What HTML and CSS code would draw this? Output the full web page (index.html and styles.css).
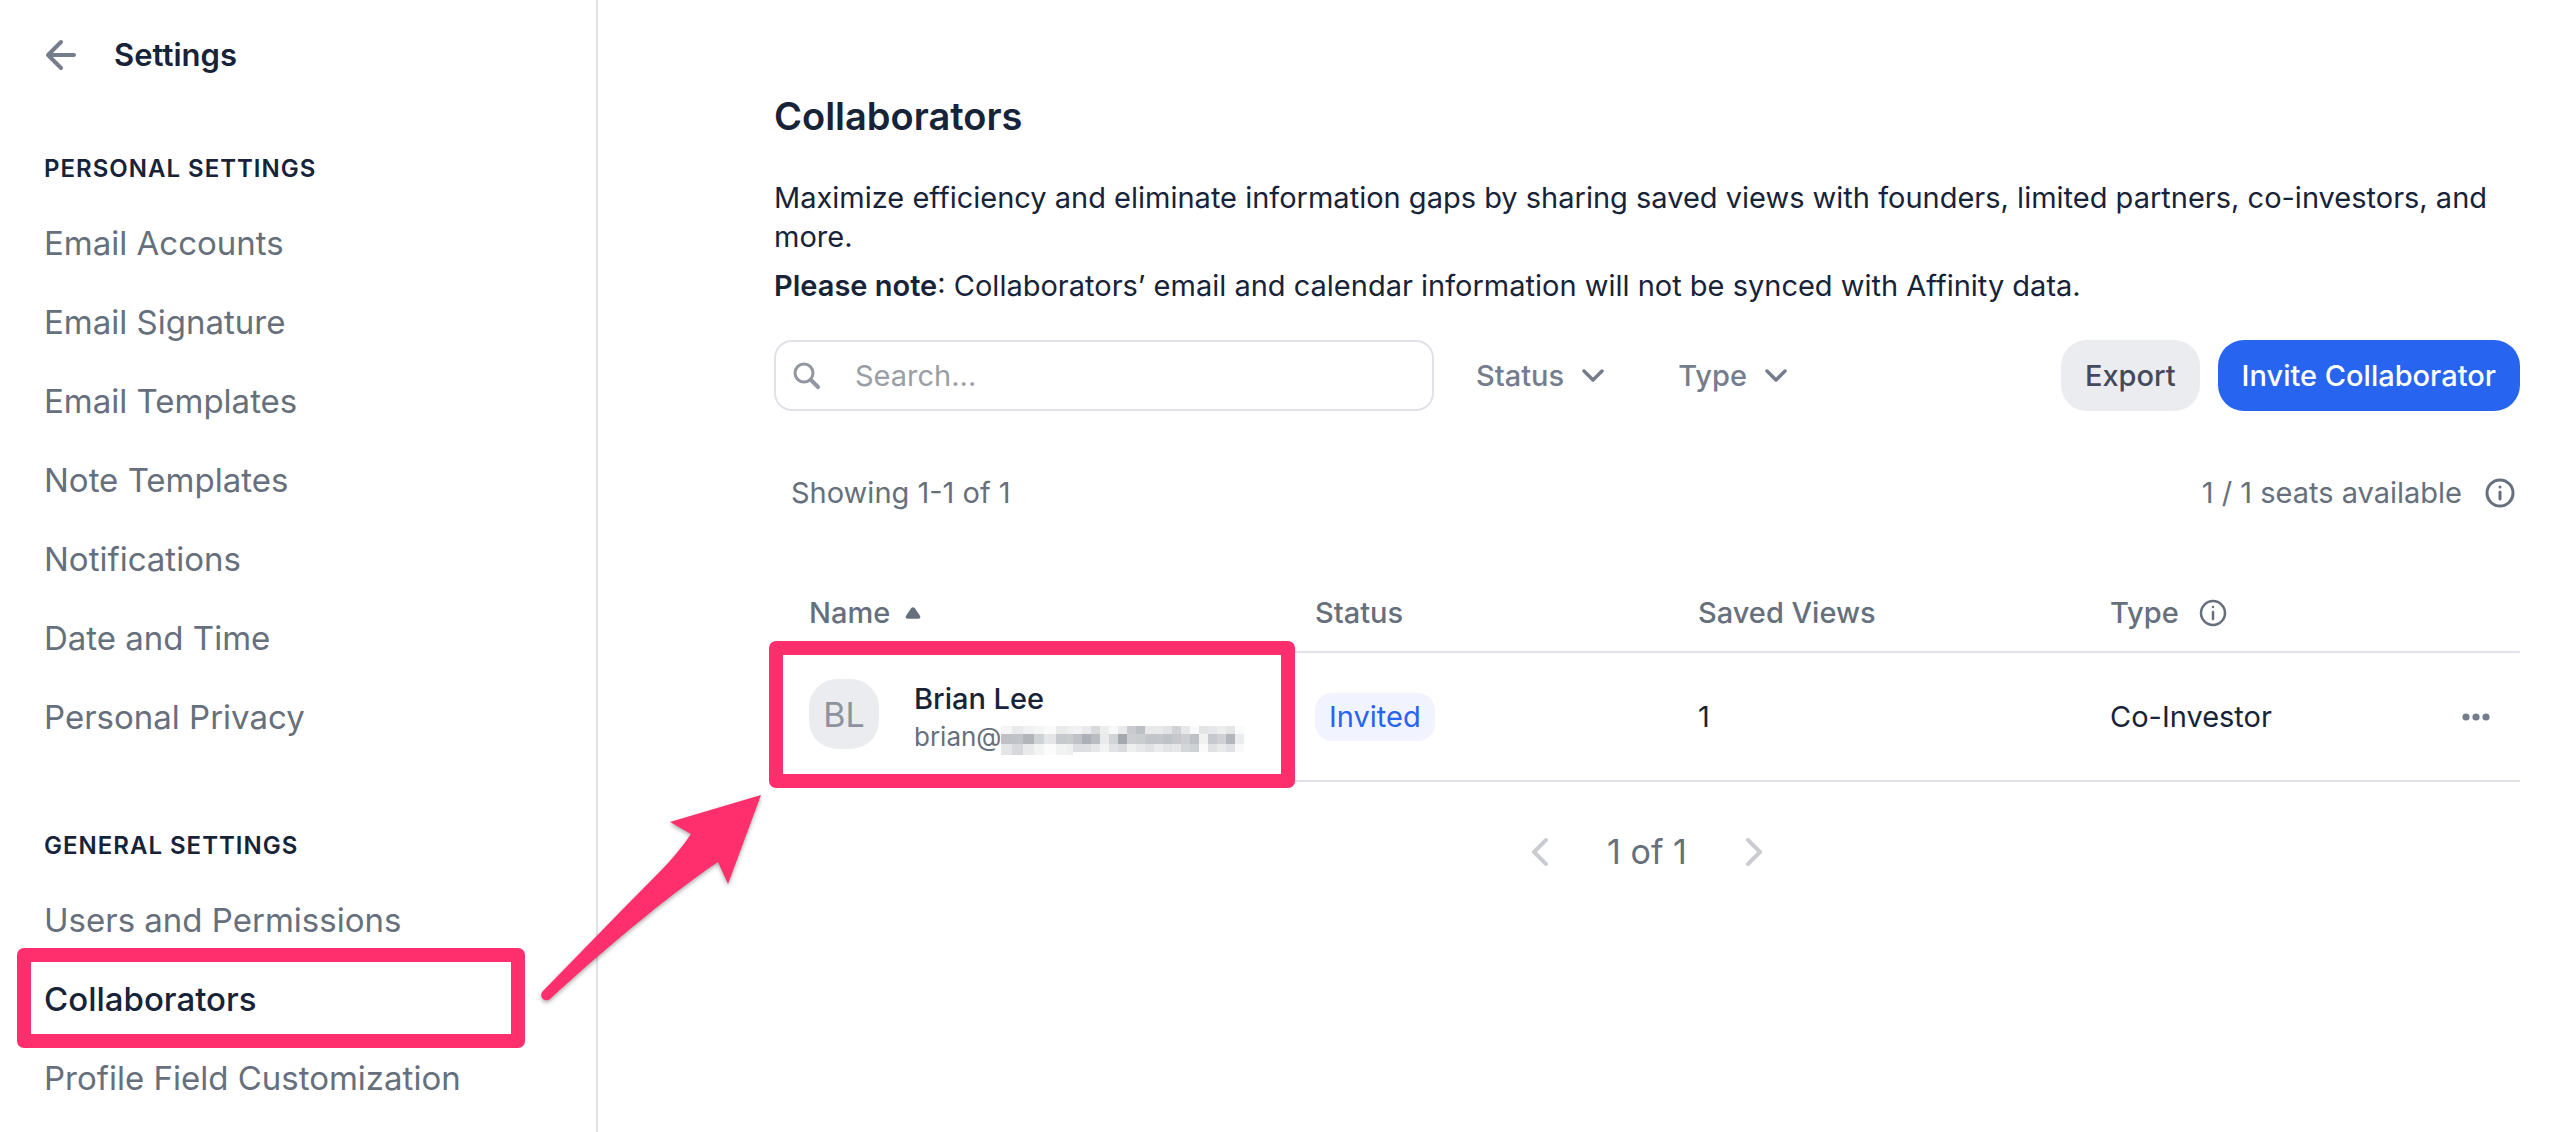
FILE: index.html
```html
<!DOCTYPE html>
<html lang="en">
<head>
<meta charset="utf-8">
<title>Settings – Collaborators</title>
<link rel="stylesheet" href="styles.css">
</head>
<body>
<div class="app">
  <aside class="sidebar">
    <header class="sidebar-header">
      <button class="icon-button" type="button" aria-label="Back">
        <svg width="34" height="32" viewBox="0 0 34 32" fill="none" stroke="#757d8d" stroke-width="4" stroke-linecap="round" stroke-linejoin="round"><path d="M30 16H4M17 3L4 16l13 13"/></svg>
      </button>
      <h2 class="sidebar-title">Settings</h2>
    </header>
    <nav class="nav-group" aria-labelledby="personal">
      <h3 class="nav-heading" id="personal">PERSONAL SETTINGS</h3>
      <a class="nav-link" href="#">Email Accounts</a>
      <a class="nav-link" href="#">Email Signature</a>
      <a class="nav-link" href="#">Email Templates</a>
      <a class="nav-link" href="#">Note Templates</a>
      <a class="nav-link" href="#">Notifications</a>
      <a class="nav-link" href="#">Date and Time</a>
      <a class="nav-link" href="#">Personal Privacy</a>
    </nav>
    <nav class="nav-group" aria-labelledby="general">
      <h3 class="nav-heading" id="general">GENERAL SETTINGS</h3>
      <a class="nav-link" href="#">Users and Permissions</a>
      <a class="nav-link active" href="#" aria-current="page">Collaborators
        <svg class="arrow" width="250" height="230" viewBox="0 0 250 230" fill="#ff2e6c" aria-hidden="true"><path d="M231 15L140 42L161 54C144 80 120 101 91 131L13 211A5 5 0 0 0 20 219C67 176 110 140 145 113C160 102 174 91 188 82L198 104Z"/></svg>
      </a>
      <a class="nav-link" href="#">Profile Field Customization</a>
    </nav>
  </aside>

  <main class="content">
    <h1 class="title">Collaborators</h1>
    <p class="text">Maximize efficiency and eliminate information gaps by sharing saved views with founders, limited partners, co-investors, and more.</p>
    <p class="text"><strong>Please note</strong>: Collaborators’ email and calendar information will not be synced with Affinity data.</p>

    <div class="toolbar">
      <label class="search">
        <svg width="28" height="28" viewBox="0 0 28 28" fill="none" stroke="#9297a2" stroke-width="3" stroke-linecap="round"><circle cx="11" cy="11" r="9"/><path d="M18 18l7 7" stroke-width="4"/></svg>
        <input class="search-input" type="search" placeholder="Search..." aria-label="Search">
      </label>
      <div class="filters">
        <button class="filter" type="button">Status
          <svg width="24" height="14" viewBox="0 0 24 14" fill="none" stroke="currentColor" stroke-width="3.5" stroke-linecap="round" stroke-linejoin="round"><path d="M3 2l9 9 9-9"/></svg>
        </button>
        <button class="filter" type="button">Type
          <svg width="24" height="14" viewBox="0 0 24 14" fill="none" stroke="currentColor" stroke-width="3.5" stroke-linecap="round" stroke-linejoin="round"><path d="M3 2l9 9 9-9"/></svg>
        </button>
      </div>
      <div class="actions">
        <button class="button" type="button">Export</button>
        <button class="button primary" type="button">Invite Collaborator</button>
      </div>
    </div>

    <div class="summary">
      <span>Showing 1-1 of 1</span>
      <span class="seats">1 / 1 seats available
        <svg width="30" height="30" viewBox="0 0 30 30" fill="none" stroke="currentColor" stroke-width="3" stroke-linecap="round"><circle cx="15" cy="15" r="13"/><path d="M15 14v7M15 9v0"/></svg>
      </span>
    </div>

    <table class="table">
      <colgroup><col class="col-name"><col class="col-status"><col class="col-views"><col><col class="col-more"></colgroup>
      <thead>
        <tr>
          <th class="name-col" scope="col"><span class="head">Name <svg width="16" height="13" viewBox="0 0 18 14" fill="currentColor"><path d="M9 1Q10 1 11 2L17 11Q18 14 15 14H3Q0 14 1 11L7 2Q8 1 9 1Z"/></svg></span></th>
          <th scope="col">Status</th>
          <th scope="col">Saved Views</th>
          <th scope="col"><span class="head wide">Type <svg width="28" height="28" viewBox="0 0 28 28" fill="none" stroke="currentColor" stroke-width="2.5" stroke-linecap="round"><circle cx="14" cy="14" r="12"/><path d="M14 13v7M14 8v0"/></svg></span></th>
          <th scope="col" aria-label="Actions"></th>
        </tr>
      </thead>
      <tbody>
        <tr>
          <td class="name-col highlighted">
            <div class="person">
              <span class="avatar">BL</span>
              <div>
                <div class="person-name">Brian Lee</div>
                <div class="person-email">brian@<svg id="redacted" width="250" height="29" viewBox="0 0 250 29" shape-rendering="crispEdges" aria-hidden="true"></svg></div>
              </div>
            </div>
          </td>
          <td><span class="badge">Invited</span></td>
          <td>1</td>
          <td>Co-Investor</td>
          <td>
            <button class="icon-button" type="button" aria-label="More"><svg width="28" height="8" viewBox="0 0 28 8" fill="#757d8d"><circle cx="4" cy="4" r="3.6"/><circle cx="14" cy="4" r="3.6"/><circle cx="24" cy="4" r="3.6"/></svg></button>
          </td>
        </tr>
      </tbody>
    </table>

    <div class="pager">
      <button class="icon-button" type="button" aria-label="Previous page"><svg width="18" height="28" viewBox="0 0 18 28" fill="none" stroke="#cbccd1" stroke-width="4" stroke-linecap="round" stroke-linejoin="round"><path d="M15 2L3 14l12 12"/></svg></button>
      <span>1 of 1</span>
      <button class="icon-button" type="button" aria-label="Next page"><svg width="18" height="28" viewBox="0 0 18 28" fill="none" stroke="#cbccd1" stroke-width="4" stroke-linecap="round" stroke-linejoin="round"><path d="M3 2l12 12L3 26"/></svg></button>
    </div>
  </main>
</div>
<script src="script.js"></script>
</body>
</html>
```
FILE: script.js
```js
// Mosaic that hides the domain of the e-mail address.
const widths = [11, 11, 11, 10, 12, 11, 6].concat(Array(19).fill(9));
const rows = [
  { y: 0, h: 8, c: "f5f5f5 e9eaeb f0f1f2 f4f5f5 fafbfa e9ebeb eeeff0 f2f2f2 e9eaeb d8dadd eceded f7f8f8 e9eaec c8cacf bcbfc4 e7e9e9 e8e9ea e2e3e5 d0d2d6 e6e7e9 fafafa e2e4e6 e5e7e8 eceded e3e5e7 fafbfb" },
  { y: 8, h: 10, c: "bfc1c6 c0c3c7 b2b6ba d0d3d6 e3e5e7 c6c9ce c9cccf bec1c6 abafb8 b9bcc1 e9eaec d2d4d8 a4a9af cccfd2 cacdd0 c2c5c9 c3c6cb bfc2c6 c6c8cb cccfd1 bec2c6 f0f1f1 c6c9cd cfd1d5 b2b6bc ebeced" },
  { y: 18, h: 8, c: "e3e5e7 d6d8dc e7e9eb f2f3f3 fafbfa f1f2f2 eeefef dcdee1 dedfe2 e4e6e8 f2f3f3 e0e2e5 d8dade eeefef e6e8ea e0e2e4 e9ebec e2e4e6 e6e7e9 d4d7da ced2d5 f9faf9 dfe1e4 e8e9ea dfe1e4 f8f9f8" }
];
const svg = document.getElementById("redacted");
for (const row of rows) {
  let x = 0;
  row.c.split(" ").forEach((color, i) => {
    const rect = document.createElementNS("http://www.w3.org/2000/svg", "rect");
    rect.setAttribute("x", x);
    rect.setAttribute("y", row.y);
    rect.setAttribute("width", widths[i]);
    rect.setAttribute("height", row.y === 18 && i < 7 ? 11 : row.h);
    rect.setAttribute("fill", "#" + color);
    svg.appendChild(rect);
    x += widths[i];
  });
}
```
FILE: styles.css
```css
* { box-sizing: border-box; }

body {
  margin: 0;
  background: #fff;
  color: #172339;
  font-family: Inter, "Liberation Sans", sans-serif;
  font-size: 29px;
  line-height: 39px;
}

h1, h2, h3, p { margin: 0; }
svg { display: block; flex: none; }
button, input { font: inherit; }

button {
  padding: 0;
  border: 0;
  background: none;
  color: inherit;
  cursor: pointer;
}

.icon-button { display: flex; align-items: center; }
.app { display: flex; min-height: 100vh; }

/* Sidebar */
.sidebar {
  flex: none;
  width: 598px;
  padding: 35px 44px 0 44px;
  border-right: 2px solid #e1e2e9;
}

.sidebar-header {
  display: flex;
  align-items: center;
  gap: 36px;
  margin-bottom: 80px;
}

.sidebar-title { font-size: 31px; line-height: 40px; font-weight: 600; }
.nav-group + .nav-group { margin-top: 75px; }

.nav-heading {
  margin-bottom: 21px;
  font-size: 24px;
  line-height: 28px;
  font-weight: 600;
  letter-spacing: 1px;
}

.nav-link {
  display: block;
  font-size: 33px;
  line-height: 79px;
  color: #66707d;
  text-decoration: none;
}

.nav-link.active { position: relative; color: #172339; font-weight: 500; }

.nav-link.active::after,
.highlighted::after {
  content: "";
  position: absolute;
  border: 14px solid #ff2e6c;
  border-radius: 7px;
  pointer-events: none;
}

.nav-link.active::after { inset: -12px 27px -9px -27px; }

.arrow {
  position: absolute;
  left: 486px;
  top: -180px;
  filter: drop-shadow(0 2px 2px rgba(0, 0, 0, 0.35));
}

/* Content */
.content { flex: 1; min-width: 0; padding: 92px 44px 0 176px; }
.title { margin-bottom: 38px; font-size: 38px; line-height: 48px; font-weight: 600; }
.text + .text { margin-top: 10px; }
.text strong { font-weight: 600; }

.toolbar { display: flex; align-items: center; margin-top: 35px; }

.search {
  display: flex;
  align-items: center;
  gap: 34px;
  flex: 0 1 660px;
  height: 71px;
  padding: 0 17px;
  border: 2px solid #e1e2e9;
  border-radius: 18px;
}

.search-input {
  flex: 1;
  min-width: 0;
  padding: 0;
  border: 0;
  outline: 0;
  background: none;
  color: inherit;
}

.search-input::placeholder { color: #9a9ea6; opacity: 1; }
.filters { display: flex; gap: 73px; margin-left: 42px; }

.filter {
  display: flex;
  align-items: center;
  gap: 17px;
  color: #757d8d;
  font-weight: 500;
}

.actions { display: flex; gap: 18px; margin-left: auto; }

.button {
  height: 71px;
  padding: 0 24px;
  border-radius: 26px;
  background: #ebecf0;
  color: #424a5b;
  font-weight: 500;
}

.button.primary { background: #2764f0; color: #fff; }

.summary {
  display: flex;
  justify-content: space-between;
  margin-top: 62px;
  padding: 0 5px 0 17px;
  color: #66707d;
}

.seats { display: flex; align-items: center; gap: 23px; }

/* Table */
.table {
  width: 100%;
  margin-top: 57px;
  border-collapse: separate;
  border-spacing: 0;
  table-layout: fixed;
}

.col-name { width: 541px; }
.col-status { width: 383px; }
.col-views { width: 412px; }
.col-more { width: 58px; }

.table th {
  padding: 24px 0 19px;
  border-bottom: 2px solid #e1e2e9;
  color: #66707d;
  font-weight: 500;
  text-align: left;
}

.table td {
  height: 129px;
  padding: 0;
  border-bottom: 2px solid #e1e2e9;
}

.table .name-col { padding-left: 35px; }
.head { display: flex; align-items: center; gap: 15px; }
.head.wide { gap: 20px; }
.highlighted { position: relative; }
.highlighted::after { inset: -12px 20px -8px -5px; }
.person { display: flex; gap: 35px; }

.avatar {
  flex: none;
  width: 70px;
  height: 70px;
  border-radius: 28px;
  background: #ebecf0;
  color: #8d939e;
  font-size: 34px;
  line-height: 71px;
  text-align: center;
}

.person-name { font-weight: 500; }

.person-email {
  display: flex;
  align-items: flex-end;
  color: #66707d;
  font-size: 26px;
  line-height: 37px;
}

.badge {
  display: inline-block;
  padding: 0 14px;
  border-radius: 17px;
  background: #f1f4fe;
  color: #2764f0;
  line-height: 48px;
}

.pager {
  display: flex;
  justify-content: center;
  align-items: center;
  gap: 58px;
  margin-top: 50px;
  color: #66707d;
  font-size: 34px;
  line-height: 40px;
}
```
